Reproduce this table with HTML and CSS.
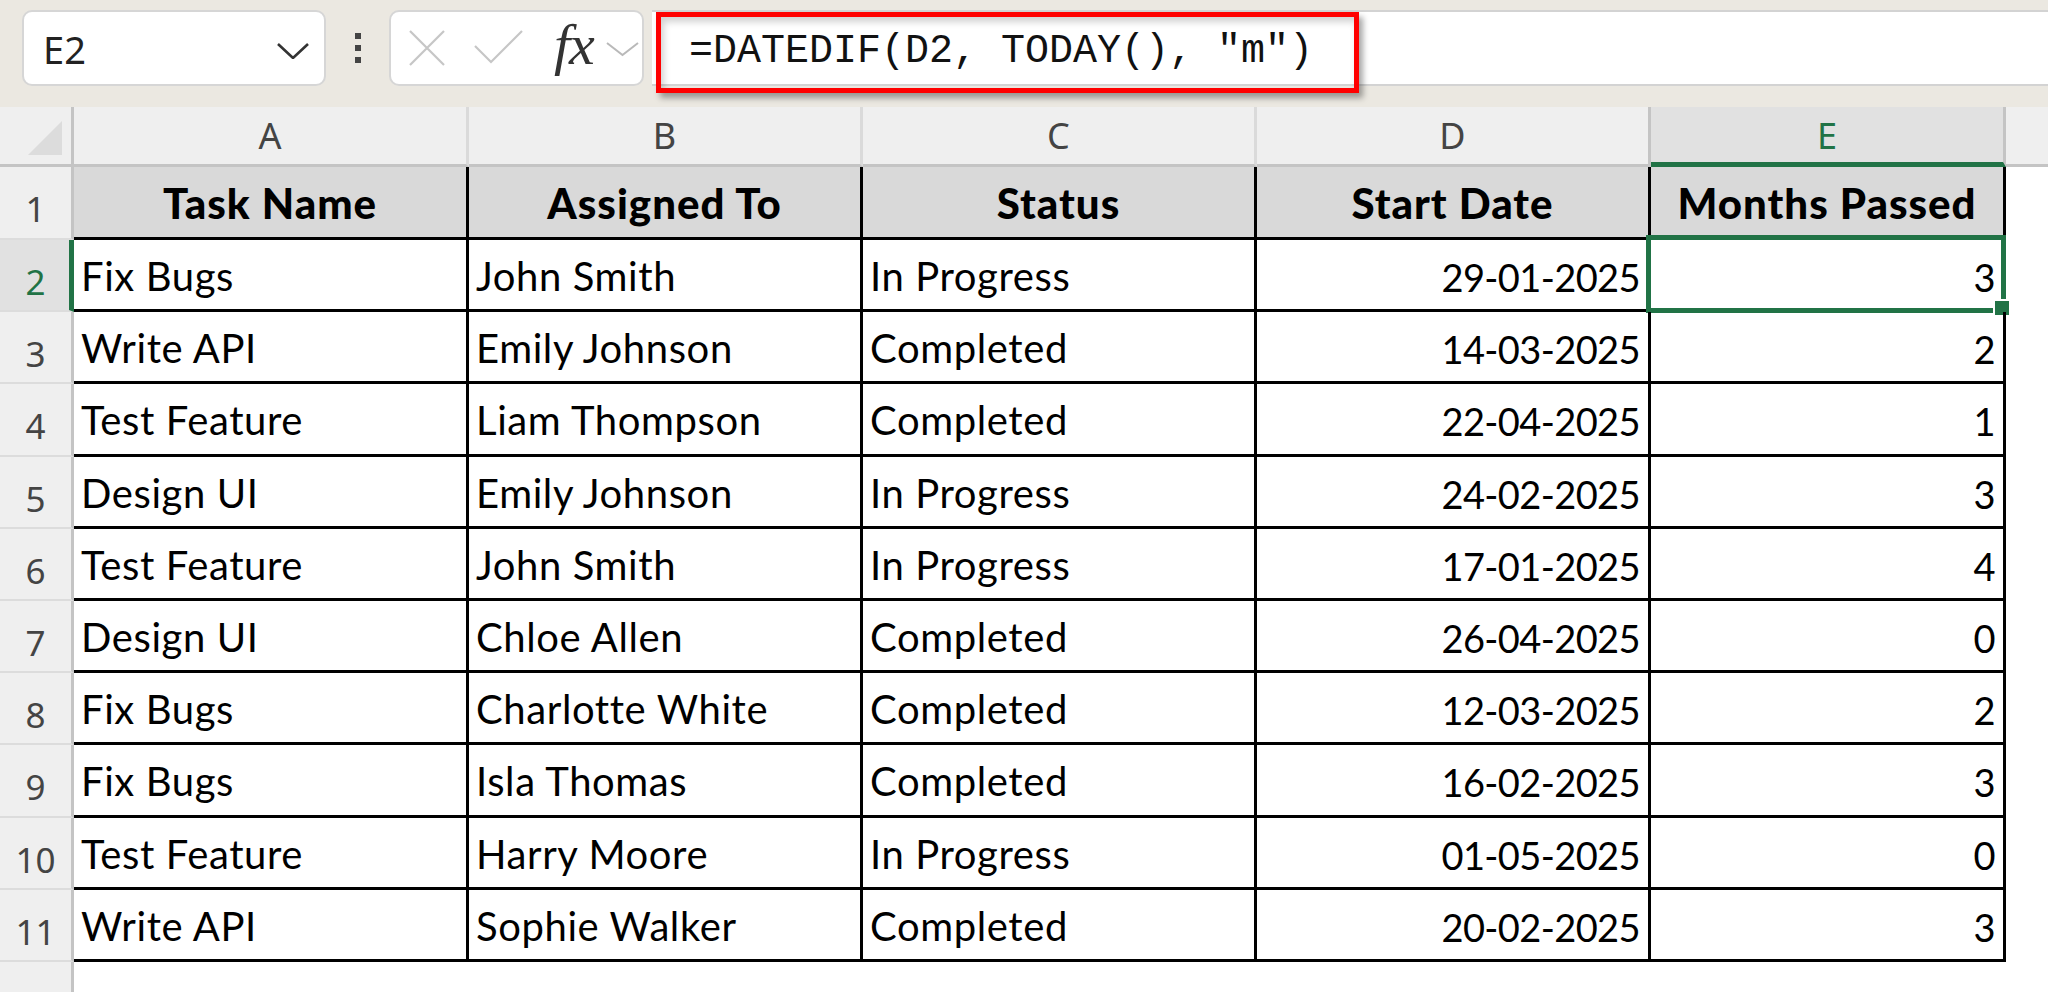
FILE: index.html
```html
<!DOCTYPE html>
<html>
<head>
<meta charset="utf-8">
<link rel="stylesheet" href="styles.css">
</head>
<body>
<div class="app">
  <div class="fbar">
    <div class="namebox">
      <span class="nb-text">E2</span>
      <svg class="nb-chev" width="32" height="16" viewBox="0 0 32 16"><polyline points="1,1 16,15 31,1" fill="none" stroke="#333" stroke-width="2.6"/></svg>
    </div>
    <div class="dots"><i></i><i></i><i></i></div>
    <div class="fxbox">
      <svg class="ic-x" width="38" height="38" viewBox="0 0 38 38"><path d="M2 2 L36 36 M36 2 L2 36" stroke="#c6c6c6" stroke-width="2.2" fill="none"/></svg>
      <svg class="ic-check" width="50" height="36" viewBox="0 0 50 36"><polyline points="1,17 17,33 48,2" fill="none" stroke="#c6c6c6" stroke-width="2.2"/></svg>
      <span class="fx">fx</span>
      <svg class="ic-chev" width="33" height="16" viewBox="0 0 33 16"><polyline points="1,2 16.5,14 32,2" fill="none" stroke="#b9b9b9" stroke-width="2"/></svg>
    </div>
    <div class="finput"><span class="formula">=DATEDIF(D2, TODAY(), "m")</span></div>
    <div class="redbox"></div>
  </div>

  <div class="sheet">
    <div class="corner"><svg width="36" height="36" viewBox="0 0 36 36"><polygon points="35,1 35,35 1,35" fill="#dcdcdc"/></svg></div>
    <div class="ch">A</div>
    <div class="ch">B</div>
    <div class="ch">C</div>
    <div class="ch ch-pre">D</div>
    <div class="ch ch-sel">E</div>
    <div class="ch-fill"></div>

    <div class="rh">1</div>
    <div class="c hd">Task Name</div>
    <div class="c hd">Assigned To</div>
    <div class="c hd">Status</div>
    <div class="c hd">Start Date</div>
    <div class="c hd">Months Passed</div>
    <div class="fill"></div>

    <div class="rh rh-sel">2</div>
    <div class="c">Fix Bugs</div>
    <div class="c">John Smith</div>
    <div class="c">In Progress</div>
    <div class="c num">29-01-2025</div>
    <div class="c num active">3<span class="sel"></span><span class="handle"></span></div>
    <div class="fill"></div>

    <div class="rh">3</div>
    <div class="c">Write API</div>
    <div class="c">Emily Johnson</div>
    <div class="c">Completed</div>
    <div class="c num">14-03-2025</div>
    <div class="c num">2</div>
    <div class="fill"></div>

    <div class="rh">4</div>
    <div class="c">Test Feature</div>
    <div class="c">Liam Thompson</div>
    <div class="c">Completed</div>
    <div class="c num">22-04-2025</div>
    <div class="c num">1</div>
    <div class="fill"></div>

    <div class="rh">5</div>
    <div class="c">Design UI</div>
    <div class="c">Emily Johnson</div>
    <div class="c">In Progress</div>
    <div class="c num">24-02-2025</div>
    <div class="c num">3</div>
    <div class="fill"></div>

    <div class="rh">6</div>
    <div class="c">Test Feature</div>
    <div class="c">John Smith</div>
    <div class="c">In Progress</div>
    <div class="c num">17-01-2025</div>
    <div class="c num">4</div>
    <div class="fill"></div>

    <div class="rh">7</div>
    <div class="c">Design UI</div>
    <div class="c">Chloe Allen</div>
    <div class="c">Completed</div>
    <div class="c num">26-04-2025</div>
    <div class="c num">0</div>
    <div class="fill"></div>

    <div class="rh">8</div>
    <div class="c">Fix Bugs</div>
    <div class="c">Charlotte White</div>
    <div class="c">Completed</div>
    <div class="c num">12-03-2025</div>
    <div class="c num">2</div>
    <div class="fill"></div>

    <div class="rh">9</div>
    <div class="c">Fix Bugs</div>
    <div class="c">Isla Thomas</div>
    <div class="c">Completed</div>
    <div class="c num">16-02-2025</div>
    <div class="c num">3</div>
    <div class="fill"></div>

    <div class="rh">10</div>
    <div class="c">Test Feature</div>
    <div class="c">Harry Moore</div>
    <div class="c">In Progress</div>
    <div class="c num">01-05-2025</div>
    <div class="c num">0</div>
    <div class="fill"></div>

    <div class="rh">11</div>
    <div class="c">Write API</div>
    <div class="c">Sophie Walker</div>
    <div class="c">Completed</div>
    <div class="c num">20-02-2025</div>
    <div class="c num">3</div>
    <div class="fill"></div>

    <div class="rh rh-empty"></div>
    <div class="empty"></div>
  </div>
</div>
</body>
</html>
```

FILE: styles.css
```css
html, body {
  margin: 0;
  padding: 0;
  background: #ffffff;
}

.app {
  width: 2048px;
  height: 992px;
  overflow: hidden;
  position: relative;
}

/* ---------- formula bar ---------- */
.fbar {
  position: relative;
  height: 107px;
  box-sizing: border-box;
  padding-top: 10px;
  background: #ebe8e1;
  display: flex;
  align-items: flex-start;
}

.namebox {
  margin-left: 22px;
  width: 304px;
  height: 76px;
  box-sizing: border-box;
  border: 2px solid #d6d6d6;
  border-radius: 10px;
  background: #fff;
  display: flex;
  align-items: center;
  justify-content: space-between;
  padding: 0 15px 0 19px;
}

.nb-text {
  font-family: "Noto Sans", sans-serif;
  font-size: 38px;
  color: #222;
  margin-top: 2px;
}

.nb-chev {
  display: block;
  margin-top: 6px;
}

.dots {
  width: 63px;
  height: 76px;
  display: flex;
  flex-direction: column;
  align-items: center;
  justify-content: center;
  gap: 6px;
}

.dots i {
  display: block;
  width: 6px;
  height: 6px;
  background: #444;
}

.fxbox {
  width: 255px;
  height: 76px;
  box-sizing: border-box;
  border: 2px solid #d6d6d6;
  border-radius: 10px;
  background: #fff;
  display: flex;
  align-items: center;
  padding-left: 17px;
}

.ic-x {
  display: block;
  margin-top: -1px;
}

.ic-check {
  display: block;
  margin-left: 28px;
  margin-top: -2px;
}

.fx {
  font-family: "Liberation Serif", serif;
  font-style: italic;
  font-size: 58px;
  line-height: 1;
  color: #333;
  margin-left: 30px;
  margin-top: -6px;
  letter-spacing: -1px;
}

.ic-chev {
  display: block;
  margin-left: 12px;
  margin-top: 2px;
}

.finput {
  margin-left: 8px;
  flex: 1;
  height: 76px;
  box-sizing: border-box;
  border-top: 2px solid #d3d3d3;
  border-bottom: 2px solid #d3d3d3;
  background: #fff;
  padding-left: 37px;
  padding-top: 17px;
}

.formula {
  font-family: "Liberation Mono", monospace;
  font-size: 40px;
  color: #111;
  white-space: pre;
}

.redbox {
  position: absolute;
  left: 656px;
  top: 12px;
  width: 703px;
  height: 81px;
  box-sizing: border-box;
  border: 5px solid #ff0000;
  box-shadow: 4px 5px 6px rgba(0, 0, 0, 0.35), inset 3px 5px 7px rgba(0, 0, 0, 0.18);
}

/* ---------- sheet ---------- */
.sheet {
  display: grid;
  grid-template-columns: 74px 395px 394px 394px 394px 355px 1fr;
  grid-template-rows: 60px 73px repeat(10, 72.2px) 1fr;
  height: 885px;
  font-family: "Lato", sans-serif;
}

.corner {
  background: #efefef;
  border-right: 3px solid #c4c4c4;
  border-bottom: 3px solid #c4c4c4;
  box-sizing: border-box;
  display: flex;
  align-items: flex-end;
  justify-content: flex-end;
  padding: 0 8px 8px 0;
}

.corner svg {
  display: block;
}

.ch {
  background: #efefef;
  border-right: 3px solid #dadada;
  border-bottom: 3px solid #c4c4c4;
  box-sizing: border-box;
  text-align: center;
  font-family: "Noto Sans", sans-serif;
  font-size: 36px;
  color: #444;
  padding-top: 4px;
  line-height: normal;
}

.ch-pre {
  border-right-color: #c4c4c4;
}

.ch-sel {
  background: #e1e1e1;
  border-right-color: #c4c4c4;
  border-bottom: 5px solid #217346;
  color: #217346;
}

.ch-fill {
  background: #efefef;
  border-bottom: 3px solid #c4c4c4;
}

.rh {
  background: #efefef;
  border-right: 3px solid #c4c4c4;
  border-bottom: 2px solid #dcdcdc;
  box-sizing: border-box;
  text-align: center;
  font-family: "Noto Sans", sans-serif;
  font-size: 35px;
  color: #444;
  padding-top: 18px;
  line-height: normal;
}

.rh-sel {
  background: #e1e1e1;
  border-right: 5px solid #217346;
  color: #217346;
  padding-left: 2px;
}

.rh-empty {
  border-bottom: none;
}

.c {
  position: relative;
  border-right: 3px solid #000;
  border-bottom: 3px solid #000;
  box-sizing: border-box;
  font-size: 40px;
  letter-spacing: 0.6px;
  color: #000;
  padding: 12px 7px 0 7px;
  line-height: normal;
  white-space: nowrap;
}

.hd {
  background: #d9d9d9;
  font-weight: 900;
  font-size: 42px;
  letter-spacing: 1px;
  text-align: center;
  padding-top: 11px;
}

.num {
  text-align: right;
  font-size: 38px;
  letter-spacing: -0.6px;
  padding-top: 14px;
  padding-right: 8px;
}

.fill {
  background: #fff;
}

.empty {
  grid-column: 2 / 8;
  background: #fff;
}

.sel {
  position: absolute;
  left: -5px;
  top: -5px;
  right: -3px;
  bottom: -4px;
  border: 5px solid #217346;
  pointer-events: none;
}

.handle {
  position: absolute;
  right: -8px;
  bottom: -8px;
  width: 14px;
  height: 14px;
  background: #217346;
  border: 2px solid #fff;
}
```
